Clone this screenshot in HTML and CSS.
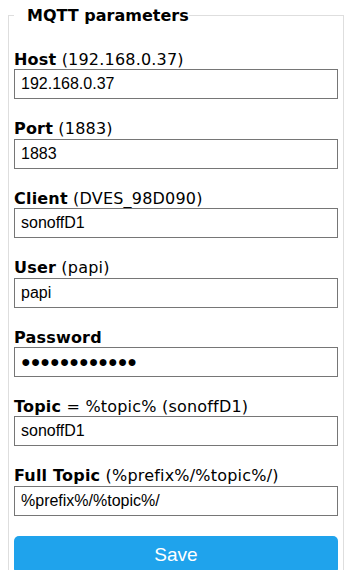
FILE: index.html
```html
<!DOCTYPE html>
<html>
<head>
<meta charset="utf-8">
<link rel="stylesheet" href="styles.css">
</head>
<body>
<div class="page">
  <fieldset class="box">
    <legend class="legend"><b>MQTT parameters</b></legend>
    <div class="form">
      <div class="row">
        <div class="label"><b>Host</b> (192.168.0.37)</div>
        <input class="field" type="text" value="192.168.0.37">
      </div>
      <div class="row">
        <div class="label"><b>Port</b> (1883)</div>
        <input class="field" type="text" value="1883">
      </div>
      <div class="row">
        <div class="label"><b>Client</b> (DVES_98D090)</div>
        <input class="field" type="text" value="sonoffD1">
      </div>
      <div class="row">
        <div class="label"><b>User</b> (papi)</div>
        <input class="field" type="text" value="papi">
      </div>
      <div class="row">
        <div class="label"><b>Password</b></div>
        <input class="field pw" type="text" value="●●●●●●●●●●●●">
      </div>
      <div class="row">
        <div class="label"><b>Topic</b> = %topic% (sonoffD1)</div>
        <input class="field" type="text" value="sonoffD1">
      </div>
      <div class="row">
        <div class="label"><b>Full Topic</b> (%prefix%/%topic%/)</div>
        <input class="field" type="text" value="%prefix%/%topic%/">
      </div>
      <button class="save">Save</button>
    </div>
  </fieldset>
</div>
</body>
</html>
```
FILE: styles.css
```css
html, body {
  margin: 0;
  padding: 0;
  background: #fff;
}
.page {
  padding: 6px 14px 0 8px;
  font-family: "DejaVu Sans", Verdana, sans-serif;
  font-size: 16px;
  color: #000;
}
.box {
  margin: 0;
  border: 1px solid #dedede;
  padding: 0 5px;
}
.legend {
  padding: 0 0 0 13px;
  line-height: 19px;
  font-size: 16px;
}
.form {
  display: flex;
  flex-direction: column;
  padding-top: 25px;
}
.row {
  display: flex;
  flex-direction: column;
  margin-bottom: 20px;
}
.label {
  line-height: 19.4px;
  height: 19.4px;
  white-space: nowrap;
  letter-spacing: 0.2px;
}
.field {
  box-sizing: border-box;
  width: 100%;
  height: 30px;
  margin: 0;
  border: 1px solid #767676;
  padding: 0 6px;
  font-family: "Liberation Sans", Arial, sans-serif;
  font-size: 16px;
  color: #000;
  background: #fff;
  outline: none;
}
.pw {
  font-size: 16px;
  letter-spacing: 0;
}
.save {
  display: block;
  width: 100%;
  height: 38px;
  border: 0;
  border-radius: 5px;
  background: #1fa3ec;
  color: #fff;
  font-family: "Liberation Sans", Arial, sans-serif;
  font-size: 19px;
  padding: 0;
}
```
